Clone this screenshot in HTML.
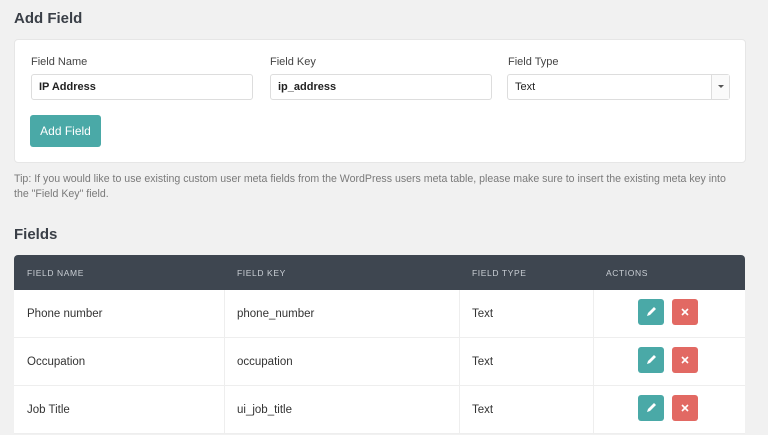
<!DOCTYPE html>
<html><head><style>
*{margin:0;padding:0;box-sizing:border-box}
body{width:768px;height:435px;background:#f1f1f1;font-family:"Liberation Sans",Arial,sans-serif;position:relative;overflow:hidden;color:#333}
.a{position:absolute}
h2{position:absolute;font-size:15px;font-weight:bold;color:#3a3f47}
.card{left:14px;top:39px;width:732px;height:124px;background:#fff;border-radius:4px;border:1px solid #e6e6e6}
.lbl{font-size:11px;color:#444}
.inp{height:26px;border:1px solid #ddd;border-radius:3px;background:#fff;font-size:11px;padding:0 7px;line-height:24px;color:#222}
.btn{left:30px;top:115px;width:71px;height:32px;background:#4aa9a7;border-radius:3px;color:#fff;font-size:12px;text-align:center;line-height:32px}
.tip{left:14px;top:172px;width:750px;font-size:10.6px;color:#7a7a7a;line-height:15px;white-space:nowrap}
.th{left:14px;top:255px;width:731px;height:35px;background:#3e4650;border-radius:4px 4px 0 0}
.th span{position:absolute;top:13px;font-size:8.5px;letter-spacing:.6px;color:#c9ced4}
.row{left:14px;width:731px;height:48px;background:#fff;border-bottom:1px solid #eee}
.row span{position:absolute;top:18px;font-size:11.5px;color:#333}
.v{position:absolute;top:0;width:1px;height:48px;background:#eee}
.e,.d{position:absolute;top:9px;width:26px;height:26px;border-radius:3px}
.e{left:624px;background:#4aa9a7}.d{left:658px;background:#e26963}
</style></head><body>
<h2 style="left:14px;top:10px">Add Field</h2>
<div class="a card"></div>
<div class="a lbl" style="left:31px;top:56px">Field Name</div>
<div class="a lbl" style="left:270px;top:56px">Field Key</div>
<div class="a lbl" style="left:508px;top:56px">Field Type</div>
<div class="a inp" style="left:31px;top:74px;width:222px;font-weight:bold">IP Address</div>
<div class="a inp" style="left:270px;top:74px;width:222px;font-weight:bold">ip_address</div>
<div class="a inp" style="left:507px;top:74px;width:223px">Text<div style="position:absolute;right:0;top:0;width:18px;height:24px;border-left:1px solid #ddd;background:#fafafa"><div style="position:absolute;left:6px;top:10px;border:3px solid transparent;border-top:3px solid #555"></div></div></div>
<div class="a btn">Add Field</div>
<div class="a tip">Tip: If you would like to use existing custom user meta fields from the WordPress users meta table, please make sure to insert the existing meta key into<br>the "Field Key" field.</div>
<h2 style="left:14px;top:226px">Fields</h2>
<div class="a th"><span style="left:13px">FIELD NAME</span><span style="left:223px">FIELD KEY</span><span style="left:458px">FIELD TYPE</span><span style="left:592px">ACTIONS</span></div>
<div class="a row" style="top:290px"><span style="left:13px">Phone number</span><span style="left:223px">phone_number</span><span style="left:458px">Text</span><i class="v" style="left:210px"></i><i class="v" style="left:445px"></i><i class="v" style="left:579px"></i>
<div class="e"><svg width="26" height="26"><path d="M9 17l1-3 6-6 2 2-6 6z" fill="#fff"/></svg></div><div class="d"><svg width="26" height="26"><path d="M10 10l6 6M16 10l-6 6" stroke="#fff" stroke-width="1.6"/></svg></div></div>
<div class="a row" style="top:338px"><span style="left:13px">Occupation</span><span style="left:223px">occupation</span><span style="left:458px">Text</span><i class="v" style="left:210px"></i><i class="v" style="left:445px"></i><i class="v" style="left:579px"></i>
<div class="e"><svg width="26" height="26"><path d="M9 17l1-3 6-6 2 2-6 6z" fill="#fff"/></svg></div><div class="d"><svg width="26" height="26"><path d="M10 10l6 6M16 10l-6 6" stroke="#fff" stroke-width="1.6"/></svg></div></div>
<div class="a row" style="top:386px"><span style="left:13px">Job Title</span><span style="left:223px">ui_job_title</span><span style="left:458px">Text</span><i class="v" style="left:210px"></i><i class="v" style="left:445px"></i><i class="v" style="left:579px"></i>
<div class="e"><svg width="26" height="26"><path d="M9 17l1-3 6-6 2 2-6 6z" fill="#fff"/></svg></div><div class="d"><svg width="26" height="26"><path d="M10 10l6 6M16 10l-6 6" stroke="#fff" stroke-width="1.6"/></svg></div></div>
</body></html>
